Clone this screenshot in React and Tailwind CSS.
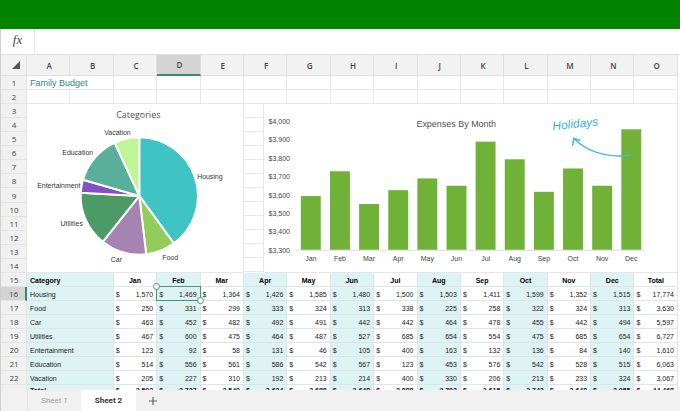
const COLUMNS = ["A", "B", "C", "D", "E", "F", "G", "H", "I", "J", "K", "L", "M", "N", "O"]
const MONTHS = ["Jan", "Feb", "Mar", "Apr", "May", "Jun", "Jul", "Aug", "Sep", "Oct", "Nov", "Dec"]
const CHART_ROWS = [3, 4, 5, 6, 7, 8, 9, 10, 11, 12, 13, 14]

const BUDGET = [
    { name: "Housing", color: "#40c4c3", label: [184, 75], values: [1570, 1469, 1364, 1426, 1585, 1480, 1500, 1503, 1411, 1599, 1352, 1515] },
    { name: "Food", color: "#92cd5c", label: [144, 156], values: [250, 331, 299, 333, 324, 313, 338, 225, 258, 322, 324, 313] },
    { name: "Car", color: "#a783b4", label: [90, 158], values: [463, 452, 482, 492, 491, 442, 442, 464, 478, 455, 442, 494] },
    { name: "Utilities", color: "#4c9a65", label: [45, 122], values: [467, 600, 475, 464, 487, 527, 685, 654, 554, 475, 685, 654] },
    { name: "Entertainment", color: "#8450c4", label: [32, 84], values: [123, 92, 58, 131, 46, 105, 400, 163, 132, 136, 84, 140] },
    { name: "Education", color: "#58b09a", label: [51, 51], values: [514, 556, 561, 586, 542, 567, 123, 453, 576, 542, 528, 515] },
    { name: "Vacation", color: "#bff595", label: [91, 31], values: [205, 227, 310, 192, 213, 214, 400, 330, 206, 213, 233, 324] },
]

const sum = (values) => values.reduce((a, b) => a + b, 0)
const withTotal = (values) => [...values, sum(values)]
const monthTotals = MONTHS.map((_, i) => sum(BUDGET.map((row) => row.values[i])))
const grandTotal = sum(monthTotals)

const slicePath = (cx, cy, r, from, to) => {
    const point = (share) => {
        const angle = share * 2 * Math.PI
        return `${cx + r * Math.sin(angle)} ${cy - r * Math.cos(angle)}`
    }
    return `M${cx} ${cy} L${point(from)} A${r} ${r} 0 ${to - from > 0.5 ? 1 : 0} 1 ${point(to)} Z`
}

const PieChart = () => {
    let start = 0
    const slices = BUDGET.map((row) => {
        const from = start
        start += sum(row.values) / grandTotal
        return { ...row, d: slicePath(113, 92, 59, from, start) }
    })

    return (
        <svg viewBox="0 0 217 168" className="h-[168px] w-full font-['Liberation_Sans',sans-serif]" role="img" aria-label="Categories">
            <text x="112" y="14" textAnchor="middle" className="fill-[#505050] font-['Open_Sans',sans-serif] text-[9px]">Categories</text>
            {slices.map((slice) => (
                <path key={slice.name} d={slice.d} fill={slice.color} stroke="#fff" strokeWidth="2" strokeLinejoin="round" />
            ))}
            {slices.map((slice) => (
                <text key={slice.name} x={slice.label[0]} y={slice.label[1]} textAnchor="middle" className="fill-[#333] text-[7px]">
                    {slice.name}
                </text>
            ))}
        </svg>
    )
}

const BarChart = () => {
    const base = 146
    const yFor = (value) => base - ((value - 3300) / 100) * 18.46

    return (
        <svg viewBox="0 0 415 168" className="h-[168px] w-full font-['Liberation_Sans',sans-serif]" role="img" aria-label="Expenses By Month">
            {[4000, 3900, 3800, 3700, 3600, 3500, 3400, 3300].map((tick) => (
                <text key={tick} x="26" y={yFor(tick) + 3} textAnchor="end" className="fill-[#444] text-[7px]">
                    ${tick.toLocaleString("en-US")}
                </text>
            ))}
            <text x="193" y="23" textAnchor="middle" className="fill-[#505050] text-[9px]">Expenses By Month</text>
            <path d={`M32 ${base + 0.5} H382`} stroke="#dcdcdc" />
            {MONTHS.map((month, i) => {
                const x = 37 + i * 29.25
                return (
                    <g key={month}>
                        <rect x={x} y={yFor(monthTotals[i])} width="20" height={base - yFor(monthTotals[i])} fill="#70b238" />
                        <text x={x + 10} y="157" textAnchor="middle" className="fill-[#444] text-[7px]">{month}</text>
                    </g>
                )
            })}
            <text
                x="290"
                y="26"
                transform="rotate(-6 290 26)"
                className="fill-[#35aedb] font-['Liberation_Sans',sans-serif] text-[12px] italic"
            >
                Holidays
            </text>
            <path d="M368 51 C345 54 325 48 312 35 M310 41 L311 34 L317 36" fill="none" stroke="#4bb8dc" strokeWidth="1.5" strokeLinecap="round" />
        </svg>
    )
}

const RowNumber = ({ n, active = false }) => (
    <th
        scope="row"
        className={`h-[14px] border-r border-b border-[#e4e4e4] p-0 pl-px text-center font-['Open_Sans',sans-serif] text-[8px] leading-[13px] font-normal text-[#444] ${
            active ? "border-r-2 border-r-[#2f8f62] bg-[#d4d4d4]" : "bg-[#f1f1f1]"
        }`}
    >
        {n}
    </th>
)

const band = (i) => (i % 2 === 1 ? "bg-[#def3f3]" : "bg-white")

const MoneyRow = ({ n, name, values, activeColumn, total = false }) => {
    const cell = total ? "align-top" : "pt-0.5"

    return (
        <tr className={total ? "font-bold" : ""}>
            <RowNumber n={n} active={activeColumn !== undefined} />
            <td colSpan={2} className={`border-r border-b border-[#dce6e6] bg-[#def3f3] p-0 pl-[3px] ${cell}`}>{name}</td>
            {values.map((value, i) => (
                <td
                    key={i}
                    className={`relative border-r border-b border-[#dce6e6] p-0 pr-[3px] pl-[2px] ${cell} ${band(i)} ${activeColumn === i ? "z-10" : ""}`}
                >
                    <div className="flex justify-between">
                        <span>$</span>
                        <span>{value.toLocaleString("en-US")}</span>
                    </div>
                    {activeColumn === i ? (
                        <div className="absolute -inset-px border border-[#3b9c71]">
                            <span className="absolute -top-1 -left-1 size-[7px] rounded-full border border-[#3b9c71] bg-white" />
                            <span className="absolute -right-1 -bottom-1 size-[7px] rounded-full border border-[#3b9c71] bg-white" />
                        </div>
                    ) : null}
                </td>
            ))}
        </tr>
    )
}

const Sheet = () => (
    <table className="w-full table-fixed border-separate border-spacing-0 text-[7px] leading-[11px] text-[#222]">
        <colgroup>
            <col className="w-[26px]" />
            {COLUMNS.map((c) => <col key={c} />)}
        </colgroup>
        <thead>
            <tr className="h-[21px] bg-[#f2f2f2] font-['Open_Sans',sans-serif] text-[8px] text-[#444]">
                <th className="border-r border-b border-[#e0e0e0] p-0">
                    <svg viewBox="0 0 8 8" className="ml-[11px] size-2" aria-hidden="true">
                        <path d="M8 0V8H0Z" fill="#555" />
                    </svg>
                </th>
                {COLUMNS.map((c) => (
                    <th
                        key={c}
                        scope="col"
                        className={`border-r p-0 pl-0.5 font-semibold ${
                            c === "D" ? "border-b-2 border-[#e0e0e0] border-b-[#3b8c62] bg-[#d4d4d4]" : "border-b border-[#e0e0e0]"
                        }`}
                    >
                        {c}
                    </th>
                ))}
            </tr>
        </thead>
        <tbody>
            <tr>
                <RowNumber n={1} />
                <td colSpan={2} className="border-r border-b border-[#e6e6e6] p-0 pt-0.5 pl-[3px] text-[9px] text-[#2a8a7c]">Family Budget</td>
                {COLUMNS.slice(2).map((c) => <td key={c} className="border-r border-b border-[#e6e6e6] p-0" />)}
            </tr>
            <tr>
                <RowNumber n={2} />
                {COLUMNS.map((c) => <td key={c} className="border-r border-b border-[#e6e6e6] p-0" />)}
            </tr>
            {CHART_ROWS.map((n, i) => (
                <tr key={n}>
                    <RowNumber n={n} />
                    {i === 0 ? (
                        <td colSpan={15} rowSpan={12} className="border-r border-[#e6e6e6] p-0">
                            <div className="flex">
                                <div className="w-1/3 shrink-0 border-r border-b border-[#e6e6e6]">
                                    <PieChart />
                                </div>
                                <div className="w-5 shrink-0 border-r border-[#e6e6e6]">
                                    {CHART_ROWS.map((row) => <div key={row} className="h-[14px] border-b border-[#e6e6e6]" />)}
                                </div>
                                <div className="min-w-0 flex-1 border-b border-[#e6e6e6]">
                                    <BarChart />
                                </div>
                            </div>
                        </td>
                    ) : null}
                </tr>
            ))}
            <tr className="font-bold text-black">
                <RowNumber n={15} />
                <td colSpan={2} className="border-r border-b border-[#dce6e6] bg-[#def3f3] p-0 pt-0.5 pl-[3px]">Category</td>
                {[...MONTHS, "Total"].map((label, i) => (
                    <td key={label} className={`border-r border-b border-[#dce6e6] p-0 pt-0.5 text-center ${band(i)}`}>{label}</td>
                ))}
            </tr>
            {BUDGET.map((row, i) => (
                <MoneyRow key={row.name} n={16 + i} name={row.name} values={withTotal(row.values)} activeColumn={i === 0 ? 1 : undefined} />
            ))}
            <MoneyRow n={23} name="Total" values={withTotal(monthTotals)} total />
        </tbody>
    </table>
)

export default function App() {
    return (
        <div className="flex h-screen flex-col overflow-hidden bg-white font-['Liberation_Sans',sans-serif]">
            <header className="h-[29px] shrink-0 bg-[#038400]" />
            <div className="flex min-h-0 flex-1 flex-col border-l border-[#d0d0d0]">
                <div className="flex h-[26px] shrink-0 border-b border-[#e0e0e0]">
                    <label
                        htmlFor="formula"
                        className="w-[34px] border-r border-[#e4e4e4] text-center font-['Liberation_Serif',serif] text-[13px] leading-[22px] text-[#444] italic"
                    >
                        fx
                    </label>
                    <input id="formula" type="text" className="min-w-0 flex-1 px-2 text-xs outline-none" />
                </div>
                <main className="min-h-0 flex-1 overflow-hidden pr-0.5">
                    <Sheet />
                </main>
                <nav className="flex h-[21px] shrink-0 bg-[#f1f1f1] pl-[26px] font-[Roboto,sans-serif] text-[8px]">
                    <button type="button" className="w-[54px] border-l border-[#e4e4e4] text-[#a0a0a0]">Sheet 1</button>
                    <button type="button" className="w-[55px] bg-white font-bold text-[#333]">Sheet 2</button>
                    <button type="button" aria-label="Add sheet" className="flex w-[34px] items-center justify-center">
                        <svg viewBox="0 0 8 8" className="size-2" aria-hidden="true">
                            <path d="M4 0V8M0 4H8" stroke="#666" strokeWidth="1.2" />
                        </svg>
                    </button>
                </nav>
            </div>
        </div>
    )
}
